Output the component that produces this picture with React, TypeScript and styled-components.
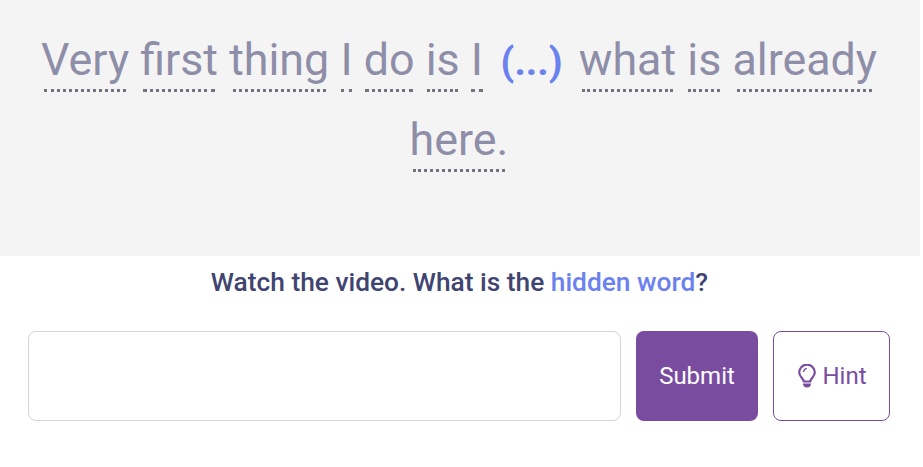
import React from "react";
import styled, { createGlobalStyle } from "styled-components";

const Global = createGlobalStyle`
  html, body { margin: 0; padding: 0; background: #fff; }
  body { font-family: Roboto, "Liberation Sans", sans-serif; }
  * { box-sizing: border-box; }
`;
const Page = styled.div`
  width: 920px;
`;
const Panel = styled.div`
  height: 256px;
  background: #f4f4f4;
  padding: 20.5px 21px 0 19px;
  text-align: center;
  font-size: 44.8px;
  line-height: 78.4px;
  font-weight: 400;
  color: #8e8ea9;
`;
const Word = styled.span`
  position: relative;
  display: inline-block;
  &::after {
    content: "";
    position: absolute;
    left: 3.5%;
    right: 3.5%;
    bottom: 7px;
    border-bottom: 3px dotted #74747f;
  }
`;
const Blank = styled.span`
  display: inline-block;
  color: #6b82ee;
  font-weight: 700;
  font-size: 39.5px;
  margin: 0 5px 0 6.5px;
`;
const Question = styled.div`
  margin-top: 10px;
  padding-right: 1px;
  text-align: center;
  font-size: 26.3px;
  line-height: 32px;
  font-weight: 500;
  color: #3f4470;
`;
const Accent = styled.span`
  color: #6b82ee;
`;
const Form = styled.div`
  display: flex;
  gap: 15px;
  margin-top: 33px;
  padding: 0 30px 0 28px;
`;
const Field = styled.input`
  flex: 1;
  height: 90px;
  border: 1px solid #d3d5dc;
  border-radius: 8px;
  background: #fff;
  outline: none;
`;
const Submit = styled.button`
  width: 122px;
  height: 90px;
  border: none;
  border-radius: 8px;
  background: #7a4ca0;
  color: #fff;
  font: 400 24px Roboto, sans-serif;
`;
const Hint = styled.button`
  width: 117px;
  height: 90px;
  display: flex;
  align-items: center;
  justify-content: center;
  gap: 6px;
  padding: 0 0 0 2px;
  border: 1px solid #7a4ca0;
  border-radius: 8px;
  background: #fff;
  color: #7a4ca0;
  font: 400 24px Roboto, sans-serif;
`;

const words1 = ["Very", "first", "thing", "I", "do", "is", "I"];
const words2 = ["what", "is", "already"];

export default function App() {
  return (
    <Page>
      <Global />
      <Panel>
        {words1.map((w, i) => <React.Fragment key={i}><Word>{w}</Word> </React.Fragment>)}
        <Blank>(...)</Blank>{" "}
        {words2.map((w, i) => <React.Fragment key={i}><Word>{w}</Word> </React.Fragment>)}
        <Word>here.</Word>
      </Panel>
      <Question>Watch the video. What is the <Accent>hidden word</Accent>?</Question>
      <Form>
        <Field />
        <Submit>Submit</Submit>
        <Hint>
          <svg width="18" height="25" viewBox="0 0 18 25" fill="none" stroke="currentColor" strokeWidth="2.2">
            <path d="M5.800 17.500c0-2.800-4.600-4.800-4.600-9a7.800 7.800 0 0 1 15.600 0c0 4.200-4.600 6.200-4.600 9z" />
            <path d="M5.600 8c.2-2 1.400-3.400 3.200-3.700" strokeWidth="1.300" />
            <path d="M5 19.500h8c0 2.500-1.500 4-4 4s-4-1.500-4-4z" fill="currentColor" stroke="none" />
          </svg>
          Hint
        </Hint>
      </Form>
    </Page>
  );
}
